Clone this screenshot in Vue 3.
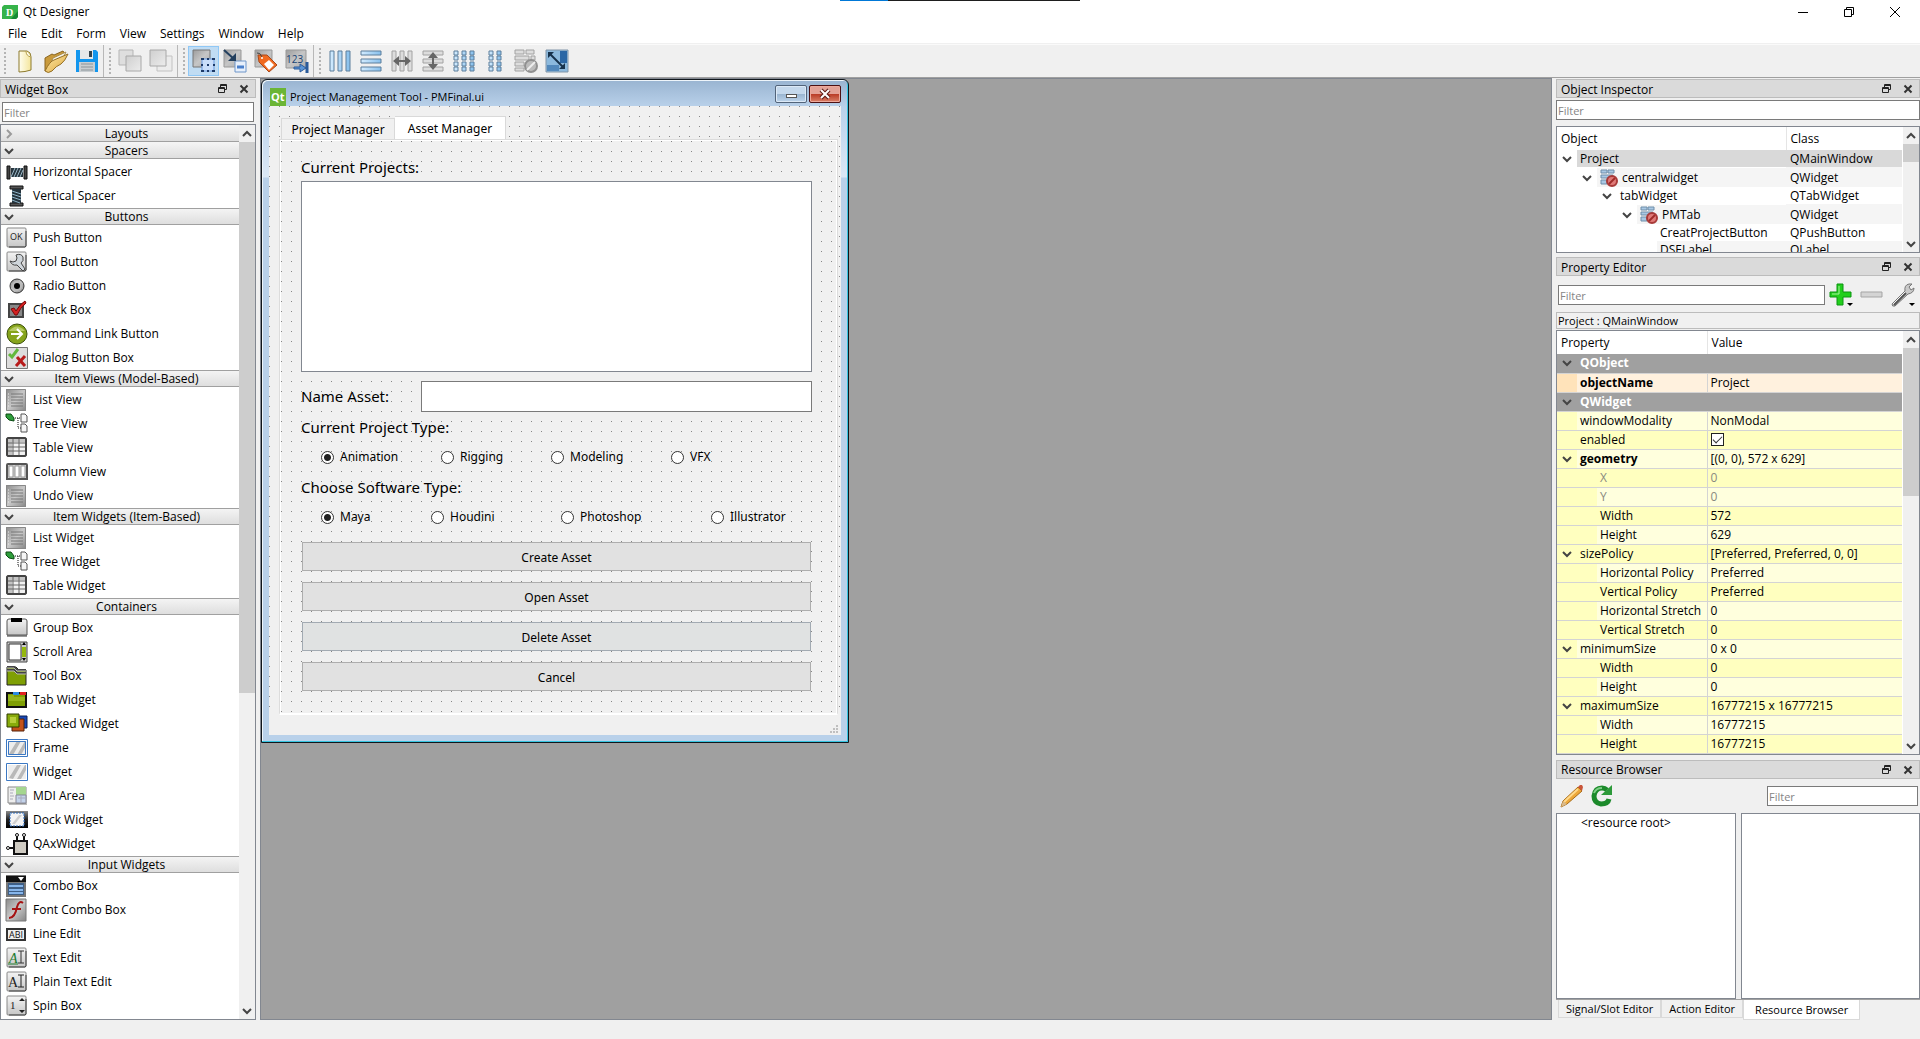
<script setup>
import { ref } from 'vue'

const menus = ['File', 'Edit', 'Form', 'View', 'Settings', 'Window', 'Help']

const icons = {
  new: '<path d="M6 2h8q4 1 4 6v13q-6 2-12 2z" fill="url(#paper)" stroke="#8d7a2c"/><path d="M13 2q0 5 5 6" fill="#fff" stroke="#b59d45"/>',
  open: '<path d="M1 22V9l7-4 2 1 9-4 2 3-13 9z" fill="#c99a3b" stroke="#8a6520"/><path d="m4 20 5-11 13-6-3 6z" fill="#f4f1e6" stroke="#a98c4c"/><path d="M1 22q5-10 9-11l14-6q-3 7-7 10-5 2-9 7-4 3-7 0z" fill="url(#gold)" stroke="#946f25"/>',
  save: '<path d="M1 1h20l2 2v20H1z" fill="#1296ee"/><path d="M5 1h13v9H5z" fill="#e4e8ea"/><path d="M14 2h3v6h-3z" fill="#33434d"/><path d="M4 13h16v10H4z" fill="#c9ced1"/><path d="M6 15h12M6 18h12M6 21h12" stroke="#8b9499"/>',
  back: '<path d="M1 1h14v15H1z" fill="#dedede" stroke="#b5b5b5"/><path d="M8 7h15v15H8z" fill="url(#soft)" stroke="#a8a8a8"/>',
  front: '<path d="M8 7h15v15H8z" fill="#ececec" stroke="#c2c2c2"/><path d="M1 1h16v16H1z" fill="url(#soft)" stroke="#a8a8a8"/>',
  widgets: '<path d="M1 1h17v17H1z" fill="url(#metal)" stroke="#777"/><path d="M10 10h12v12H10z" fill="#c9defa" stroke="#6b9ae0"/><path d="M9 9h3v2H9zM15 9h2v2h-2zM20 9h3v2h-3zM9 15h2v2H9zM21 15h2v2h-2zM9 21h3v2H9zM15 21h2v2h-2zM20 21h3v2h-3zM15 15h2v2h-2z" fill="#1c3a68"/>',
  signals: '<path d="M1 1h17v17H1z" fill="url(#metal)" stroke="#999"/><path d="M12 12h11v11H12z" fill="#e8f0fb" stroke="#6f96c9"/><path d="M14 18h7" stroke="#4b80cb" stroke-width="3"/><path d="m1 1 10 9" stroke="#24405e" stroke-width="2"/><path d="M13 12V4l-8 8z" fill="#24405e"/>',
  buddies: '<path d="M1 1h17v17H1z" fill="url(#metal)" stroke="#999"/><path d="m4 6 9 0 10 10-8 7L5 13z" fill="#f06a20" stroke="#a8481a"/><path d="m15 11 5 5-5 5-5-6z" fill="#fff"/><circle cx="8" cy="9" r="1" fill="#fff"/><path d="M3 4q3-1 5 4" fill="none" stroke="#444"/>',
  taborder: '<path d="M1 1h20v18H1z" fill="url(#metal)" stroke="#999"/><text x="1" y="14" font-size="10" fill="#174373">123</text><path d="M9 18h6v-3l6 4-6 4v-3H9z" fill="#5b95d6" stroke="#2a5b9b"/><path d="M22 13v11" stroke="#2a5b9b" stroke-width="3"/>',
  hlay: '<g fill="url(#blue)" stroke="#5d7f9c"><path d="M2 2h4v20H2zM10 2h4v20h-4zM18 2h4v20h-4z"/></g>',
  vlay: '<g fill="url(#blue)" stroke="#5d7f9c"><path d="M2 2h20v4H2zM2 10h20v4H2zM2 18h20v4H2z"/></g>',
  hsplit: '<g fill="#ddd" stroke="#a2a2a2"><path d="M2 2h4v20H2zM10 2h4v20h-4zM18 2h4v20h-4z"/></g><path d="M6 12h12" stroke="#666" stroke-width="2"/><path d="m3 12 6-5v10zM21 12l-6-5v10z" fill="#666"/>',
  vsplit: '<g fill="#ddd" stroke="#a2a2a2"><path d="M2 2h20v4H2zM2 10h20v4H2zM2 18h20v4H2z"/></g><path d="M12 6v12" stroke="#666" stroke-width="2"/><path d="m12 3 5 6H7zM12 21l5-6H7z" fill="#666"/>',
  grid: '<g fill="url(#blue)" stroke="#5d7f9c"><path d="M2 2h4v4H2zM10 2h4v4h-4zM18 2h4v4h-4zM2 7h4v4H2zM10 7h4v4h-4zM18 7h4v4h-4zM2 13h4v4H2zM10 13h4v4h-4zM18 13h4v4h-4zM2 18h4v4H2zM10 18h4v4h-4zM18 18h4v4h-4z"/></g>',
  form: '<g fill="url(#blue)" stroke="#5d7f9c"><path d="M6 2h4v4H6zM14 2h4v4h-4zM6 7h4v4H6zM14 7h4v4h-4zM6 13h4v4H6zM14 13h4v4h-4zM6 18h4v4H6zM14 18h4v4h-4z"/></g>',
  breaklay: '<g fill="#ddd" stroke="#a2a2a2"><path d="M1 1h9v4H1zM12 1h8v4h-8zM1 7h14v4H1zM17 7h4v4h-4zM1 13h9v4H1zM1 19h9v3H1z"/></g><circle cx="17" cy="17" r="6" fill="#bbb" stroke="#909090" stroke-width="2"/><path d="m13 21 8-8" stroke="#eee" stroke-width="2"/>',
  adjust: '<path d="M1 1h22v22H1z" fill="#8cb9dd" stroke="#8195a8"/><path d="M15 2h7v12h-7z" fill="#2b67a5"/><path d="M2 16h12v6H2z" fill="#5288bb"/><path d="m5 5 13 13" stroke="#17324c" stroke-width="2"/><path d="M3 3h6l-6 6zM20 20h-6l6-6z" fill="#17324c"/>'
}

const toolGroups = [
  [['new', 'New'], ['open', 'Open'], ['save', 'Save']],
  [['back', 'Send to Back'], ['front', 'Bring to Front']],
  [['widgets', 'Edit Widgets', true], ['signals', 'Edit Signals/Slots'], ['buddies', 'Edit Buddies'], ['taborder', 'Edit Tab Order']],
  [['hlay', 'Lay Out Horizontally'], ['vlay', 'Lay Out Vertically'], ['hsplit', 'Horizontal Splitter'], ['vsplit', 'Vertical Splitter'], ['grid', 'Lay Out in a Grid'], ['form', 'Lay Out in a Form'], ['breaklay', 'Break Layout'], ['adjust', 'Adjust Size']]
]

const plate = '<path d="M2 1h17q1 0 1 1v17q0 1-1 1H2q-1 0-1-1V2q0-1 1-1z" fill="url(#plate)" stroke="#888"/><path d="M3 20h16l1-1V4" fill="none" stroke="#444"/>'
const list = '<path d="M0 0h20v22H0z" fill="url(#steel)"/><path d="M.5.5h19v21H.5z" fill="none" stroke="#888"/><path d="M5 5h12M5 8h12M5 11h12M5 14h12M5 17h12" stroke="#777"/><path d="M2 5h1M2 8h1M2 11h1M2 14h1M2 17h1" stroke="#eee"/>'
const tree = '<path d="m0 1 5 0 3 4 0 3-5-1-3-3z" fill="#2e9e3b" stroke="#0c4a14"/><path d="M9 5h5M12 5v10h3" fill="none" stroke="#111" stroke-dasharray="1 1"/><path d="M15 1h4l2 2v6h-6zM15 11h4l2 2v6h-6z" fill="#f6f6f6" stroke="#555"/>'
const table = '<path d="M2 1h17l1 1v16l-1 1H2l-1-1V2z" fill="#f2f2f2" stroke="#444" stroke-width="2"/><path d="M2 2h4v16H2zM2 2h17v3H2z" fill="#c4c4c4"/><path d="M7 2v16M13 2v16M2 6h17M2 10h17M2 14h17" stroke="#666"/>'
const frame = (inner) => `<path d="M.5 2.5h21v17H.5z" fill="#fff" stroke="#3c78c3"/><path d="M2 4h18v14H2z" fill="#ededed"/><path d="m3 17 8-13h4L7 18zM11 18l8-14h1v5l-5 9z" fill="#b9b9b9"/>${inner}`

const w = {
  hspacer: '<path d="M1 5h3v13H1zM18 5h3v13h-3z" fill="#444" stroke="#111"/><path d="M5 7h12v9H5z" fill="#26343d"/><path d="m5 16 4-9M8 16l4-9M11 16l4-9M14 16l3-7" stroke="#9bb9c9"/>',
  vspacer: '<path d="M4 1h13v3H4zM4 18h13v3H4z" fill="#555" stroke="#111"/><path d="M6 4h9v14H6z" fill="#26343d"/><path d="m6 6 9 3M6 9l9 3M6 12l9 3M6 15l8 3" stroke="#8fb4c8"/>',
  push: plate + '<text x="4" y="13" font-size="9" fill="#222">OK</text>',
  tool: plate + '<path d="M10 4q5-2 7 2 1 4-2 6l4 6-2 2-6-6q-5 1-7-4l3 1 3-1 1-3z" fill="#cfd5da" stroke="#444"/>',
  radio: '<circle cx="11" cy="11" r="7" fill="url(#steel)" stroke="#333"/><circle cx="11" cy="11" r="5" fill="#bbb"/><circle cx="11" cy="11" r="3" fill="#000"/>',
  check: '<path d="M3 5h14v13H3z" fill="#888" stroke="#444" stroke-width="2"/><path d="m5 10 3-1 2 3q4-7 9-10l1 2q-6 5-9 12H9z" fill="#d42020" stroke="#7a0808"/>',
  command: '<circle cx="11" cy="11" r="10" fill="#86a41c" stroke="#3d5208"/><path d="M3 8q8-9 16 0z" fill="#b8cc66"/><path d="M5 11h10M11 6l5 5-5 5" fill="none" stroke="#fff" stroke-width="2"/>',
  dialog: '<path d="M.5.5h21v21H.5z" fill="#ddd" stroke="#777"/><path d="m3 7 3 3 6-8" fill="none" stroke="#63b83b" stroke-width="3"/><path d="m11 10 8 9M19 9l-9 10" stroke="#b81b1b" stroke-width="3"/>',
  list,
  tree,
  table,
  column: '<path d="M2 3h18q1 0 1 1v14H1V4q0-1 1-1z" fill="#ccc" stroke="#555" stroke-width="2"/><path d="M3 5h4v11H3zM9 5h4v11H9zM15 5h4v11h-4z" fill="#fff" stroke="#999"/>',
  group: '<path d="M1 4q0-2 2-2h16q2 0 2 2v14H1z" fill="url(#plate)" stroke="#555"/><path d="M5 1h11v4H5z" fill="#000"/><path d="M1 19h20" stroke="#333"/>',
  scroll: '<path d="M1 1h20v20H1z" fill="#ccc" stroke="#444"/><path d="M3 3h12v16H3z" fill="#fff" stroke="#333"/><path d="M16 6h4v10h-4z" fill="#95b80e"/><path d="m18 1 2 3h-4zM18 20l2-3h-4z"/>',
  toolbox: '<path d="M1 20V2h9l3 3h7v15z" fill="#7f9f05" stroke="#222"/><path d="M1 2h7l3 3h9M1 5h7l3 3h9" fill="none" stroke="#444" stroke-width="2"/><path d="M1 3h7l3 3h9M1 6h7l3 3h9" fill="none" stroke="#bbb"/>',
  tab: '<path d="M1 4h19v14H1z" fill="#7f9f05" stroke="#111" stroke-width="2"/><path d="M7 3h6v3H7z" fill="#2a8be0"/><path d="M14 3h6v3h-6z" fill="#e02222"/><path d="M2 6h6v2h11v4H2z" fill="#96b51c"/>',
  stacked: '<path d="M10 3h11v12H10z" fill="#1747b5" stroke="#0a1e55"/><path d="M6 6h12v12H6z" fill="#c4521a" stroke="#542009"/><path d="M1 1h12v13H1z" fill="#88ab0b" stroke="#2f3c00"/><path d="M4 5h6M4 7h6M4 9h6" stroke="#e8f36b"/>',
  frame: frame('<path d="M2.5 4.5h17v13h-17z" fill="none" stroke="#3c78c3"/>'),
  widget: frame(''),
  mdi: '<path d="M2 2h18v16H2z" fill="#eee" stroke="#888"/><path d="M10 2h10v8H10z" fill="#a5d68f"/><path d="M10 10h10v8H10z" fill="#c3d3ea" stroke="#889"/><path d="M4 5h4M4 8h3M4 11h4M4 14h3M12 13h7M15 11v7" stroke="#aab"/><path d="M3 19h18" stroke="#777"/>',
  dock: '<path d="M0 2h22v17H0z" fill="url(#darkg)"/><path d="M4 4h14v13H4z" fill="#f4f4f4" stroke="#2a6cc0" stroke-dasharray="2 1"/><path d="m6 15 7-9h3l-7 9z" fill="#cfcfcf"/>',
  ax: '<path d="M8 8h13v13H8z" fill="#cfcbc2" stroke="#111" stroke-width="2"/><path d="M11 8V3M18 8V3M8 15H3" stroke="#111" stroke-width="2"/><g fill="#fff" stroke="#111"><circle cx="11" cy="2" r="1.5"/><circle cx="18" cy="2" r="1.5"/><circle cx="2" cy="15" r="1.5"/></g>',
  combo: '<path d="M0 0h20v22H0z" fill="#777"/><path d="M0 1h20v6H0z" fill="#111"/><path d="M12 2h6l-3 4z" fill="#fff"/><path d="M2 8h16v12H2z" fill="#3f5f86"/><path d="M3 11h14M3 15h14M3 18h14" stroke="#86b5ea" stroke-width="2"/>',
  font: '<path d="M0 0h20v22H0z" fill="url(#steel)" stroke="#777"/><path d="M17 4q-4-3-6 4-2 11-8 11" fill="none" stroke="#a61313" stroke-width="2"/><path d="M6 10h9" stroke="#a61313" stroke-width="2"/>',
  line: '<path d="M1 6h18v11H1z" fill="#eee" stroke="#333" stroke-width="2"/><text x="3" y="15" font-size="9" fill="#111">ABI</text>',
  text: plate + '<text x="3" y="16" font-size="14" font-style="italic" font-family="Liberation Serif, serif" fill="#1c7a2e">A</text><path d="M2 17h10" stroke="#1c7a2e"/><path d="M12 4h6M15 4v12M12 16h6" fill="none" stroke="#333"/>',
  plain: plate + '<text x="2" y="16" font-size="14" font-family="Liberation Serif, serif" fill="#222">A</text><path d="M12 4h6M15 4v12M12 16h6" fill="none" stroke="#222"/>',
  spin: plate + '<text x="4" y="14" font-size="11" font-family="Liberation Serif, serif" fill="#222">1</text><path d="m16 3 3 3h-6zM16 18l3-3h-6z" fill="#222"/>'
}

const widgetGroups = [
  { name: 'Layouts', closed: true, items: [] },
  { name: 'Spacers', items: [['hspacer', 'Horizontal Spacer'], ['vspacer', 'Vertical Spacer']] },
  { name: 'Buttons', items: [['push', 'Push Button'], ['tool', 'Tool Button'], ['radio', 'Radio Button'], ['check', 'Check Box'], ['command', 'Command Link Button'], ['dialog', 'Dialog Button Box']] },
  { name: 'Item Views (Model-Based)', items: [['list', 'List View'], ['tree', 'Tree View'], ['table', 'Table View'], ['column', 'Column View'], ['list', 'Undo View']] },
  { name: 'Item Widgets (Item-Based)', items: [['list', 'List Widget'], ['tree', 'Tree Widget'], ['table', 'Table Widget']] },
  { name: 'Containers', items: [['group', 'Group Box'], ['scroll', 'Scroll Area'], ['toolbox', 'Tool Box'], ['tab', 'Tab Widget'], ['stacked', 'Stacked Widget'], ['frame', 'Frame'], ['widget', 'Widget'], ['mdi', 'MDI Area'], ['dock', 'Dock Widget'], ['ax', 'QAxWidget']] },
  { name: 'Input Widgets', items: [['combo', 'Combo Box'], ['font', 'Font Combo Box'], ['line', 'Line Edit'], ['text', 'Text Edit'], ['plain', 'Plain Text Edit'], ['spin', 'Spin Box']] }
]

const objects = [
  { name: 'Project', cls: 'QMainWindow', depth: 1, open: true, selected: true },
  { name: 'centralwidget', cls: 'QWidget', depth: 2, open: true, icon: true, alt: true },
  { name: 'tabWidget', cls: 'QTabWidget', depth: 3, open: true },
  { name: 'PMTab', cls: 'QWidget', depth: 4, open: true, icon: true, alt: true },
  { name: 'CreatProjectButton', cls: 'QPushButton', depth: 5 },
  { name: 'DSELabel', cls: 'QLabel', depth: 5, alt: true }
]

const props = [
  { name: 'QObject', group: true, open: true },
  { name: 'objectName', value: 'Project', bold: true, tone: 'peach' },
  { name: 'QWidget', group: true, open: true },
  { name: 'windowModality', value: 'NonModal', tone: 'light' },
  { name: 'enabled', check: true, tone: 'deep' },
  { name: 'geometry', value: '[(0, 0), 572 x 629]', bold: true, open: true, tone: 'light' },
  { name: 'X', value: '0', sub: true, dim: true, tone: 'deep' },
  { name: 'Y', value: '0', sub: true, dim: true, tone: 'light' },
  { name: 'Width', value: '572', sub: true, tone: 'deep' },
  { name: 'Height', value: '629', sub: true, tone: 'light' },
  { name: 'sizePolicy', value: '[Preferred, Preferred, 0, 0]', open: true, tone: 'deep' },
  { name: 'Horizontal Policy', value: 'Preferred', sub: true, tone: 'light' },
  { name: 'Vertical Policy', value: 'Preferred', sub: true, tone: 'deep' },
  { name: 'Horizontal Stretch', value: '0', sub: true, tone: 'light' },
  { name: 'Vertical Stretch', value: '0', sub: true, tone: 'deep' },
  { name: 'minimumSize', value: '0 x 0', open: true, tone: 'light' },
  { name: 'Width', value: '0', sub: true, tone: 'deep' },
  { name: 'Height', value: '0', sub: true, tone: 'light' },
  { name: 'maximumSize', value: '16777215 x 16777215', open: true, tone: 'deep' },
  { name: 'Width', value: '16777215', sub: true, tone: 'light' },
  { name: 'Height', value: '16777215', sub: true, tone: 'deep' }
]

const projectType = ref('Animation')
const software = ref('Maya')
const enabled = ref(true)
const projectTypes = [['Animation', 120], ['Rigging', 110], ['Modeling', 120], ['VFX', 60]]
const softwares = [['Maya', 110], ['Houdini', 130], ['Photoshop', 150], ['Illustrator', 90]]
const actions = ['Create Asset', 'Open Asset', 'Delete Asset', 'Cancel']
</script>

<template>
  <div class="app">
    <svg class="defs" width="0" height="0" aria-hidden="true">
      <defs>
        <linearGradient id="paper"><stop offset="0" stop-color="#fffef0" /><stop offset="1" stop-color="#f4e59b" /></linearGradient>
        <linearGradient id="gold" x2="1" y2="1"><stop offset="0" stop-color="#ffe9a6" /><stop offset="1" stop-color="#dda83f" /></linearGradient>
        <linearGradient id="soft" x2="1" y2="1"><stop offset="0" stop-color="#cfcfcf" /><stop offset="1" stop-color="#ececec" /></linearGradient>
        <linearGradient id="steel" x2="1" y2="1"><stop offset="0" stop-color="#8a8a8a" /><stop offset="0.5" stop-color="#c8c8c8" /><stop offset="1" stop-color="#858585" /></linearGradient>
        <linearGradient id="metal" x2="1" y2="1"><stop offset="0" stop-color="#9c9c9c" /><stop offset="0.5" stop-color="#c6c6c6" /><stop offset="1" stop-color="#acacac" /></linearGradient>
        <linearGradient id="plate" x2="0" y2="1"><stop offset="0" stop-color="#f4f4f4" /><stop offset="1" stop-color="#c6c6c6" /></linearGradient>
        <linearGradient id="darkg" x2="0" y2="1"><stop offset="0" stop-color="#8a8a8a" /><stop offset="0.5" stop-color="#222" /><stop offset="1" stop-color="#000" /></linearGradient>
        <linearGradient id="blue"><stop offset="0" stop-color="#d3ecff" /><stop offset="1" stop-color="#86bfec" /></linearGradient>
        <symbol id="down" viewBox="0 0 10 10"><path d="m1 3 4 4 4-4" fill="none" stroke="currentColor" stroke-width="2" /></symbol>
        <symbol id="up" viewBox="0 0 10 10"><path d="m1 7 4-4 4 4" fill="none" stroke="currentColor" stroke-width="2" /></symbol>
        <symbol id="right" viewBox="0 0 10 10"><path d="m3 1 4 4-4 4" fill="none" stroke="currentColor" stroke-width="2" /></symbol>
        <symbol id="float" viewBox="0 0 10 10"><path d="M2.500 3V.5h6v5H7M2 1.500h7" fill="none" stroke="#222" /><path d="M.5 3.500h6v5h-6zM.5 4.500h6" fill="none" stroke="#222" /></symbol>
        <symbol id="cross" viewBox="0 0 10 10"><path d="m1.500 1.500 7 7M8.500 1.500l-7 7" stroke="#333" stroke-width="2" /></symbol>
      </defs>
    </svg>

    <header class="top">
      <div class="strip"><i class="strip-blue"></i><i class="strip-dark"></i></div>
      <div class="titlebar">
        <svg width="16" height="16" viewBox="0 0 16 16"><path d="M2 1h14v12l-2 2H0V3z" fill="#36b34a" /><path d="M9 15h5l2-2V7z" fill="#168a35" /><text x="4" y="12" font-size="10" font-weight="700" font-family="Liberation Serif, serif" fill="#fff">D</text></svg>
        <span class="app-name">Qt Designer</span>
        <div class="win-controls">
          <button aria-label="Minimize"><svg width="12" height="12"><path d="M1 6.500h10" stroke="#000" /></svg></button>
          <button aria-label="Restore"><svg width="12" height="12"><path d="M1.500 3.500h7v7h-7zM3.500 3.500v-2h7v7h-2" fill="none" stroke="#000" /></svg></button>
          <button aria-label="Close"><svg width="12" height="12"><path d="m1 1 10 10M11 1 1 11" stroke="#000" /></svg></button>
        </div>
      </div>
      <nav class="menubar"><button v-for="m in menus" :key="m">{{ m }}</button></nav>
    </header>

    <div class="toolbar">
      <div v-for="(g, i) in toolGroups" :key="i" class="tool-group">
        <i class="grip"></i>
        <button v-for="t in g" :key="t[0]" :aria-label="t[1]" :class="{ on: t[2] }">
          <svg width="24" height="24" viewBox="0 0 24 24" v-html="icons[t[0]]"></svg>
        </button>
      </div>
    </div>

    <div class="workspace">
      <aside class="left">
        <div class="dock-title"><span>Widget Box</span><button aria-label="Float"><svg width="10" height="10"><use href="#float" /></svg></button><button aria-label="Close"><svg width="10" height="10"><use href="#cross" /></svg></button></div>
        <input class="filter widget-filter" placeholder="Filter" aria-label="Filter widgets">
        <div class="widget-list">
          <div class="widget-body">
            <section v-for="g in widgetGroups" :key="g.name">
              <h3 :class="{ closed: g.closed }"><svg width="10" height="10"><use :href="g.closed ? '#right' : '#down'" /></svg><span>{{ g.name }}</span></h3>
              <ul v-if="g.items.length">
                <li v-for="it in g.items" :key="it[1]"><svg width="22" height="22" viewBox="0 0 22 22" v-html="w[it[0]]"></svg>{{ it[1] }}</li>
              </ul>
            </section>
          </div>
          <div class="scroll"><svg width="10" height="10"><use href="#up" /></svg><div class="track"><div class="thumb thumb-widgets"></div></div><svg width="10" height="10"><use href="#down" /></svg></div>
        </div>
      </aside>

      <main class="mdi">
        <div class="subwin">
          <div class="sub-title">
            <svg width="16" height="18" viewBox="0 0 16 18"><path d="M0 0h16v18H0z" fill="#6bb536" /><text x="1" y="13" font-size="11" font-weight="700" fill="#fff">Qt</text></svg>
            <span>Project Management Tool - PMFinal.ui</span>
            <button class="sub-min" aria-label="Minimize"><i></i></button>
            <button class="sub-close" aria-label="Close"><svg width="12" height="10" viewBox="0 0 12 10"><path d="m2 1 8 8M10 1 2 9" stroke="#5b1a14" stroke-width="4" /><path d="m2 1 8 8M10 1 2 9" stroke="#fff" stroke-width="2" /></svg></button>
          </div>
          <div class="form">
            <div class="canvas dots">
              <div class="tabs"><button>Project Manager</button><button class="current">Asset Manager</button></div>
              <div class="pane dots">
                <label class="caption" for="projects">Current Projects:</label>
                <textarea id="projects" class="projects"></textarea>
                <div class="name-row"><label class="caption" for="asset">Name Asset:</label><input id="asset"></div>
                <div class="caption">Current Project Type:</div>
                <div class="radios">
                  <label v-for="r in projectTypes" :key="r[0]" :style="{ width: r[1] + 'px' }"><input v-model="projectType" type="radio" name="ptype" :value="r[0]">{{ r[0] }}</label>
                </div>
                <div class="caption">Choose Software Type:</div>
                <div class="radios">
                  <label v-for="r in softwares" :key="r[0]" :style="{ width: r[1] + 'px' }"><input v-model="software" type="radio" name="soft" :value="r[0]">{{ r[0] }}</label>
                </div>
                <div class="actions"><button v-for="a in actions" :key="a">{{ a }}</button></div>
              </div>
            </div>
            <div class="form-status"><svg width="8" height="8"><path d="M6 0h2v2H6zM3 3h2v2H3zM6 3h2v2H6zM0 6h2v2H0zM3 6h2v2H3zM6 6h2v2H6z" fill="#bfbfbf" /></svg></div>
          </div>
        </div>
      </main>

      <aside class="right">
        <section class="panel inspector">
          <div class="dock-title"><span>Object Inspector</span><button aria-label="Float"><svg width="10" height="10"><use href="#float" /></svg></button><button aria-label="Close"><svg width="10" height="10"><use href="#cross" /></svg></button></div>
          <input class="filter object-filter" placeholder="Filter" aria-label="Filter objects">
          <div class="box object-box">
            <table class="objects">
              <colgroup><col><col class="col-class"></colgroup>
              <thead><tr><th>Object</th><th>Class</th></tr></thead>
              <tbody>
                <tr v-for="o in objects" :key="o.name" :class="{ tall: o.icon, selected: o.selected, alt: o.alt }">
                  <td>
                    <div class="node" :class="'depth-' + o.depth">
                      <span class="expander"><svg v-if="o.open" width="10" height="10"><use href="#down" /></svg></span>
                      <span class="node-name"><svg v-if="o.icon" width="18" height="18" viewBox="0 0 18 18"><g fill="#a9c8e4" stroke="#6f8ea9"><path d="M1 1h6v3H1zM8 1h6v3H8zM1 6h12v3H1zM1 11h6v4H1z" /></g><circle cx="12" cy="12" r="5" fill="#e07a78" stroke="#a83a38" stroke-width="2" /><path d="m9 15 6-6" stroke="#a02c2a" stroke-width="2" /></svg>{{ o.name }}</span>
                    </div>
                  </td>
                  <td class="cls">{{ o.cls }}</td>
                </tr>
              </tbody>
            </table>
            <div class="scroll"><svg width="10" height="10"><use href="#up" /></svg><div class="track"><div class="thumb thumb-objects"></div></div><svg width="10" height="10"><use href="#down" /></svg></div>
          </div>
        </section>

        <section class="panel editor">
          <div class="dock-title"><span>Property Editor</span><button aria-label="Float"><svg width="10" height="10"><use href="#float" /></svg></button><button aria-label="Close"><svg width="10" height="10"><use href="#cross" /></svg></button></div>
          <div class="prop-bar">
            <input class="filter" placeholder="Filter" aria-label="Filter properties">
            <button aria-label="Add dynamic property"><svg width="24" height="24" viewBox="0 0 24 24"><path d="M8 1h6v8h8v5h-8v8H8v-8H1V9h7z" fill="#22cf1c" stroke="#0b9410" /><path d="M10 3v8H3" fill="none" stroke="#a5f59c" /><path d="M18 20h6l-3 3z" /></svg></button>
            <button aria-label="Remove dynamic property"><svg width="24" height="24" viewBox="0 0 24 24"><path d="M1 9h21v5H1z" fill="#d4d4d4" stroke="#a5a5a5" /></svg></button>
            <button aria-label="Configure"><svg width="24" height="24" viewBox="0 0 24 24"><path d="M1 21 14 8q-1-6 4-7l3 0-3 3 2 3 3-2q0 5-6 6L4 23q-3 1-3-2z" fill="#c9c9c9" stroke="#777" /><path d="m3 22 12-12" stroke="#555" stroke-width="2" /><path d="m2 21 12-12" stroke="#f5f5f5" /><path d="M18 20h6l-3 3z" /></svg></button>
          </div>
          <div class="prop-target">Project : QMainWindow</div>
          <div class="box prop-box">
            <table class="props">
              <colgroup><col class="col-prop"><col></colgroup>
              <thead><tr><th>Property</th><th>Value</th></tr></thead>
              <tbody>
                <tr v-for="(p, i) in props" :key="i" :class="[p.tone, { group: p.group, bold: p.bold, dim: p.dim, sub: p.sub }]">
                  <td :colspan="p.group ? 2 : 1"><div class="prop-name"><span class="expander"><svg v-if="p.open" width="10" height="10"><use href="#down" /></svg></span><span class="prop-text">{{ p.name }}</span></div></td>
                  <td v-if="!p.group" class="value"><input v-if="p.check" v-model="enabled" type="checkbox" aria-label="enabled"><template v-else>{{ p.value }}</template></td>
                </tr>
              </tbody>
            </table>
            <div class="scroll"><svg width="10" height="10"><use href="#up" /></svg><div class="track"><div class="thumb thumb-props"></div></div><svg width="10" height="10"><use href="#down" /></svg></div>
          </div>
        </section>

        <section class="panel resources">
          <div class="dock-title"><span>Resource Browser</span><button aria-label="Float"><svg width="10" height="10"><use href="#float" /></svg></button><button aria-label="Close"><svg width="10" height="10"><use href="#cross" /></svg></button></div>
          <div class="res-bar">
            <button aria-label="Edit Resources"><svg width="24" height="24" viewBox="0 0 24 24"><path d="m1 23 2-6L18 3l4 4L7 20z" fill="#eda83a" stroke="#a86c17" /><path d="m4 18 14-13" stroke="#ffd98a" stroke-width="2" /><path d="m18 3 2-2h2l1 2-1 4z" fill="#c9553a" /><path d="m1 23 2-6 4 3z" fill="#d9b98a" /></svg></button>
            <button aria-label="Reload"><svg width="24" height="24" viewBox="0 0 24 24"><path d="M19 15q-1 5-8 5-7-1-7-8 1-8 8-8 3 0 5 2" fill="none" stroke="#1c8a2b" stroke-width="5" /><path d="M22 1v10H11z" fill="#2d9a3a" /><path d="M4 9q2-5 8-5" fill="none" stroke="#7fce86" stroke-width="2" /></svg></button>
            <input class="filter" placeholder="Filter" aria-label="Filter resources">
          </div>
          <div class="res-panes"><div class="box">&lt;resource root&gt;</div><div class="box"></div></div>
          <div class="dock-tabs"><button>Signal/Slot Editor</button><button>Action Editor</button><button class="current">Resource Browser</button></div>
        </section>
      </aside>
    </div>
    <footer class="status"></footer>
  </div>
</template>

<style>
body { margin: 0; }
</style>

<style scoped>
.app { display: flex; flex-direction: column; height: 100vh; overflow: hidden; background: #f0f0f0; color: #000; font: 12px/16px "Open Sans", "Noto Sans", sans-serif; }
.app *, .app *::before { box-sizing: border-box; }
button, input, textarea { font: inherit; color: inherit; margin: 0; padding: 0; border: 0; background: none; border-radius: 0; }
svg { display: block; flex: none; overflow: visible; }
.defs { position: absolute; }
.expander, .scroll, h3 svg { color: #444; }

.top { background: #fff; border-bottom: 1px solid #f0f0f0; }
.strip { display: flex; height: 1px; padding-left: 43.75%; }
.strip-blue { width: 48px; background: #0078d7; }
.strip-dark { width: 192px; background: #1e1e1e; }
.titlebar { display: flex; align-items: center; height: 21px; padding-left: 2px; }
.app-name { flex: 1; padding-left: 5px; }
.win-controls { display: flex; margin-right: 2px; }
.win-controls button { width: 46px; height: 20px; display: grid; place-items: center; }
.menubar { display: flex; height: 21px; padding: 3px 0 0 8px; gap: 14px; }

.toolbar { display: flex; height: 34px; padding-left: 4px; border-bottom: 1px solid #a0a0a0; border-top: 1px solid #fafafa; }
.tool-group { display: flex; align-items: center; padding-right: 1px; margin-right: 5px; border-right: 1px solid #b8b8b8; }
.tool-group:last-child { border: 0; }
.grip { width: 2px; height: 26px; margin-right: 3px; background: repeating-linear-gradient(#b4b4b4 0 2px, transparent 2px 4px); }
.tool-group button { width: 31px; height: 30px; display: grid; place-items: center; }
.tool-group button.on { background: #c0dcf3; border: 1px solid #90c8f6; }

.workspace { display: flex; flex: 1; min-height: 0; }
.left { width: 256px; display: flex; flex-direction: column; padding-top: 1px; margin-right: 4px; }
.dock-title { display: flex; align-items: center; height: 19px; flex: none; padding: 1px 6px 0 4px; background: #dadada; border: 1px solid #bcbcbc; }
.dock-title span { flex: 1; padding-top: 1px; }
.dock-title button { margin-left: 11px; }
.filter { height: 20px; padding: 0 1px; font-size: 11px; background: #fff; border: 1px solid #7a7a7a; min-width: 0; }
.filter::placeholder { color: #858585; opacity: 1; }
.widget-filter { margin: 4px 2px 2px; flex: none; }
.widget-list { display: flex; flex: 1; min-height: 0; border: 1px solid #828790; background: #fff; }
.widget-body { flex: 1; overflow: hidden; }
h3 { display: flex; align-items: center; height: 17px; margin: 0; padding-left: 3px; font-size: 12px; font-weight: 400; border-top: 1px solid #a0a0a0; border-bottom: 1px solid #a0a0a0; background: linear-gradient(#f4f4f4, #dedede); }
section:first-child > h3, section:nth-child(2) > h3 { border-top-color: #f4f4f4; }
h3 span { flex: 1; text-align: center; }
h3.closed svg { color: #9a9a9a; }
ul { margin: 0; padding: 1px 0 0 5px; list-style: none; }
li { display: flex; align-items: center; gap: 5px; height: 24px; }

.scroll { display: flex; flex-direction: column; align-items: center; width: 16px; flex: none; padding: 4px 0 3px; background: #f0f0f0; }
.track { flex: 1; width: 100%; margin: 3px 0; }
.thumb { background: #cdcdcd; }
.thumb-widgets { height: 64%; }
.thumb-objects { height: 20%; }
.thumb-props { height: 38%; }

.mdi { flex: 1; min-width: 0; background: #a0a0a0; border: 1px solid #828790; }
.subwin { width: 588px; padding: 0 7px 7px; border: 1px solid #10161c; border-radius: 6px 6px 0 0; background: linear-gradient(#99b4d1, #b9d1ea 27px, #dbe8f6 97px, #b9d1ea 98px); box-shadow: inset -1px -1px #35c4e0, inset 1px 1px #eef5fb; }
.sub-title { display: flex; align-items: center; height: 26px; font-size: 11px; }
.sub-title span { flex: 1; padding: 8px 0 0 4px; }
.sub-title > svg { margin: 7px 0 0 1px; }
.sub-title button { width: 32px; height: 18px; display: grid; place-items: center; margin: 2px 2px 0 0; border: 1px solid #52647a; border-radius: 2px; box-shadow: inset 0 0 0 1px #dce9f6; }
.sub-title .sub-min { background: linear-gradient(#c4d8ec 50%, #98b4d0 50%, #bcd4ec); }
.sub-min i { width: 11px; height: 4px; margin-top: 4px; background: #fff; border: 1px solid #555; }
.sub-title .sub-close { border-color: #4c1012; margin-right: 0; box-shadow: inset 0 0 0 1px #eda99b; background: linear-gradient(#e3a297 50%, #b93a25 50%, #d98068); }
.form { background: #f0f0f0; font-family: "Noto Sans", sans-serif; }
.dots { background: #f0f0f0 conic-gradient(at 1px 1px, transparent 270deg, #888 0) 0 0 / 10px 10px; }
.canvas { padding: 10px 3px 0 10px; }
.tabs { display: flex; align-items: flex-end; padding-left: 2px; height: 23px; }
.tabs button { height: 21px; width: 114px; padding-top: 2px; background: #f0f0f0; border: 1px solid #d9d9d9; border-bottom: 0; }
.tabs .current { height: 23px; width: 111px; background: #fff; border-left: 0; }
.pane { padding: 15px 25px 0 21px; background-position: 1px 1px; border: 1px solid #dcdcdc; border-bottom: 2px solid #fff; box-shadow: inset 1px 1px #fff, inset -1px 0 #fff; height: 576px; }
.caption { display: block; height: 26px; font-size: 15px; line-height: 24px; }
.projects { display: block; width: 100%; height: 191px; background: #fff; border: 1px solid #828790; resize: none; }
.name-row { display: flex; align-items: center; justify-content: space-between; margin: 9px 0 3px; }
.name-row input { width: 391px; height: 31px; background: #fff; border: 1px solid #7a7a7a; }
.radios { display: flex; align-items: center; height: 34px; padding: 0 0 2px 20px; }
.radios label { display: flex; align-items: center; gap: 6px; }
.radios input { appearance: none; width: 13px; height: 13px; border: 1px solid #333; border-radius: 50%; background: #fff; flex: none; }
.radios input:checked { background: radial-gradient(#222 0 3px, #fff 4px); }
.actions { display: flex; flex-direction: column; gap: 11px; padding: 7px 1px 0; }
.actions button { height: 29px; padding-top: 2px; background: #e1e1e1; border: 1px solid #adadad; }
.actions button:nth-child(3) { background: #e0e2e2; border-color: #a2aab2; }
.form-status { display: flex; justify-content: flex-end; align-items: flex-end; height: 20px; padding: 0 3px 2px 0; }

.right { width: 368px; display: flex; flex-direction: column; padding: 1px 0 0 4px; }
.panel { display: flex; flex-direction: column; }
.object-filter { margin-top: 2px; }
.box { display: flex; background: #fff; border: 1px solid #828790; overflow: hidden; }
.object-box { height: 127px; margin: 6px 0 4px; }
table { flex: 1; border-collapse: collapse; table-layout: fixed; align-self: flex-start; margin-right: 1px; }
th { height: 23px; padding: 0 4px; text-align: left; font-weight: 400; }
th + th { border-left: 1px solid #e5e5e5; }
td { padding: 0; white-space: nowrap; }
.col-class { width: 116px; }
.objects td { height: 17px; }
.objects .tall td { height: 20px; padding-top: 1px; }
.node { display: flex; height: 17px; }
.tall .node { height: 19px; }
.expander { width: 20px; flex: none; display: grid; place-items: center; }
.node-name { flex: 1; display: flex; align-items: center; gap: 4px; padding-left: 3px; }
.depth-2 { padding-left: 20px; }
.depth-3 { padding-left: 40px; }
.depth-4 { padding-left: 60px; }
.depth-5 { padding-left: 80px; }
.cls { padding-left: 4px; }
.selected .node-name, .selected .cls { background: #d9d9d9; }
.alt .node-name, .alt .cls { background: #f5f5f5; }

.prop-bar { display: flex; align-items: center; height: 36px; padding: 2px 5px 0 2px; gap: 7px; }
.prop-bar .filter { flex: 1; margin-right: -3px; }
.prop-target { height: 17px; padding-left: 1px; font-size: 11px; line-height: 16px; border: 1px solid #bcbcbc; }
.prop-box { margin: 1px 0 5px; }
.col-prop { width: 150px; }
.props tbody td { height: 19px; border-bottom: 1px solid #d4d4d4; }
.props tbody .value { border-left: 1px solid #d4d4d4; padding-left: 3px; }
.prop-name { display: flex; height: 18px; }
.prop-text { flex: 1; padding-left: 3px; line-height: 18px; }
.light { background: #ffffdd; }
.deep { background: #ffffbf; }
.peach { background: #fff1de; }
.light .expander, .deep .expander { background: #ffffbf; }
.peach .expander { background: #ffe3ba; }
.sub .expander { width: 40px; }
.group { background: #a0a0a0; color: #fff; }
.bold, .group { font-weight: 700; }
.bold .value { font-weight: 400; }
.dim { color: #8a8a80; }
.value input { display: block; appearance: none; width: 13px; height: 13px; background: #fff; border: 1px solid #222; }
.value input:checked::before { content: ""; display: block; width: 9px; height: 5px; border: solid #333; border-width: 0 0 1px 1px; transform: rotate(-45deg); margin: 2px 0 0 1px; }

.resources { flex: 1; min-height: 0; }
.res-bar { display: flex; align-items: center; height: 34px; padding: 1px 2px 0 4px; gap: 6px; flex: none; }
.res-bar .filter { width: 151px; margin-left: auto; }
.res-panes { display: flex; flex: 1; gap: 5px; min-height: 0; border-bottom: 1px solid #a0a0a0; }
.res-panes .box { flex: 1; padding: 1px 0 0 24px; }
.dock-tabs { display: flex; height: 20px; padding-left: 2px; flex: none; font-size: 11px; }
.dock-tabs button { height: 18px; padding: 1px 7px 0; border: 1px solid #d9d9d9; border-top: 0; }
.dock-tabs .current { height: 20px; padding: 1px 11px 0; background: #fff; }
.status { height: 19px; flex: none; }
</style>
